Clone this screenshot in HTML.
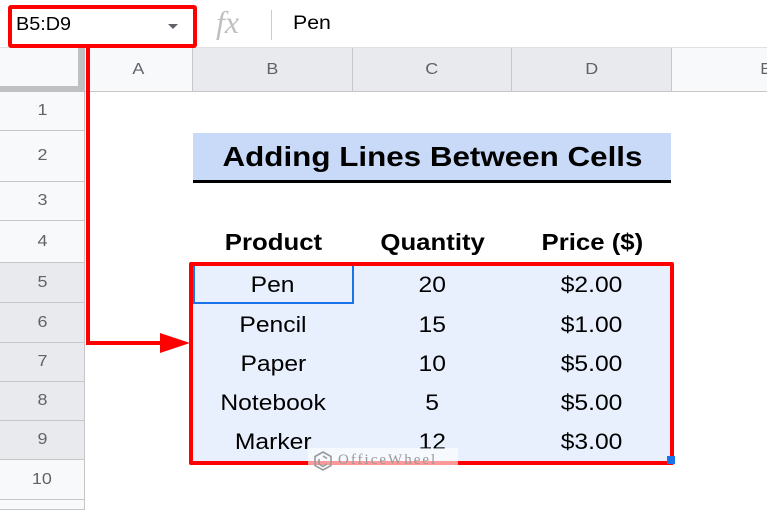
<!DOCTYPE html>
<html><head><meta charset="utf-8"><style>
*{margin:0;padding:0;box-sizing:border-box}
body{width:767px;height:505px;overflow:hidden;background:#fff;font-family:"Liberation Sans",Arial,sans-serif;position:relative}
.a{position:absolute}
.s{display:inline-block;transform:scaleX(1.12)}
.ch{position:absolute;top:48px;height:44px;border-right:1px solid #c7c7c7;border-bottom:1px solid #c7c7c7;color:#5f6368;font-size:16px;display:flex;align-items:center;justify-content:center}
.rh{position:absolute;left:0;width:85px;border-bottom:1px solid #c7c7c7;border-right:1px solid #c7c7c7;color:#5f6368;font-size:16px;display:flex;align-items:center;justify-content:center}
.c{position:absolute;font-size:22px;color:#000;display:flex;align-items:center;justify-content:center;height:40px}
</style></head><body>
<div class="a" style="left:0;top:0;width:767px;height:48px;background:#fff;border-bottom:1px solid #e0e0e0"></div>
<div class="a" style="left:8px;top:5px;width:189px;height:43px;border:4px solid #f00;border-radius:3px"></div>
<div class="a" style="left:16px;top:14px;font-size:18px;color:#000;transform-origin:left;transform:scaleX(1.1)">B5:D9</div>
<div class="a" style="left:168px;top:24px;width:0;height:0;border-left:5px solid transparent;border-right:5px solid transparent;border-top:5px solid #5f6368"></div>
<div class="a" style="left:216px;top:4px;font-size:32px;font-style:italic;font-family:'Liberation Serif',serif;color:#c0c0c0">fx</div>
<div class="a" style="left:271px;top:10px;width:1px;height:30px;background:#ccc"></div>
<div class="a" style="left:293px;top:13px;font-size:19px;color:#000;transform-origin:left;transform:scaleX(1.12)">Pen</div>

<div class="a" style="left:0;top:48px;width:85px;height:44px;background:#f8f9fa"></div>
<div class="a" style="left:78px;top:48px;width:7px;height:44px;background:#c0c0c0"></div>
<div class="a" style="left:0;top:86px;width:85px;height:6px;background:#c0c0c0"></div>
<div class="ch" style="left:85px;width:108px;background:#f8f9fa"><span class="s">A</span></div>
<div class="ch" style="left:193px;width:160px;background:#e8eaed"><span class="s">B</span></div>
<div class="ch" style="left:353px;width:159px;background:#e8eaed"><span class="s">C</span></div>
<div class="ch" style="left:512px;width:160px;background:#e8eaed"><span class="s">D</span></div>
<div class="ch" style="left:672px;width:120px;background:#f8f9fa;justify-content:flex-end;padding-right:20px">E</div>

<div class="rh" style="top:92px;height:39px;background:#f8f9fa"><span class="s">1</span></div>
<div class="rh" style="top:131px;height:51px;background:#f8f9fa"><span class="s">2</span></div>
<div class="rh" style="top:182px;height:39px;background:#f8f9fa"><span class="s">3</span></div>
<div class="rh" style="top:221px;height:42px;background:#f8f9fa"><span class="s">4</span></div>
<div class="rh" style="top:263px;height:40px;background:#e8eaed"><span class="s">5</span></div>
<div class="rh" style="top:303px;height:40px;background:#e8eaed"><span class="s">6</span></div>
<div class="rh" style="top:343px;height:39px;background:#e8eaed"><span class="s">7</span></div>
<div class="rh" style="top:382px;height:39px;background:#e8eaed"><span class="s">8</span></div>
<div class="rh" style="top:421px;height:39px;background:#e8eaed"><span class="s">9</span></div>
<div class="rh" style="top:460px;height:40px;background:#f8f9fa"><span class="s">10</span></div>
<div class="rh" style="top:500px;height:10px;background:#f8f9fa"></div>

<div class="a" style="left:193px;top:133px;width:478px;height:50px;background:#c9daf8;border-bottom:3px solid #000"></div>
<div class="a" style="left:193px;top:141px;width:478px;text-align:center;font-size:28px;font-weight:bold;color:#000"><span class="s">Adding Lines Between Cells</span></div>

<div class="c" style="left:193px;top:222px;width:160px;font-weight:bold;font-size:23px"><span class="s">Product</span></div>
<div class="c" style="left:353px;top:222px;width:159px;font-weight:bold;font-size:23px"><span class="s">Quantity</span></div>
<div class="c" style="left:512px;top:222px;width:160px;font-weight:bold;font-size:23px"><span class="s">Price ($)</span></div>

<div class="a" style="left:193px;top:263px;width:479px;height:198px;background:#e8f0fd"></div>
<div class="a" style="left:193px;top:264px;width:161px;height:40px;border:2px solid #1a73e8"></div>

<div class="c" style="left:193px;top:265px;width:160px"><span class="s">Pen</span></div>
<div class="c" style="left:353px;top:265px;width:159px"><span class="s">20</span></div>
<div class="c" style="left:512px;top:265px;width:160px"><span class="s">$2.00</span></div>
<div class="c" style="left:193px;top:305px;width:160px"><span class="s">Pencil</span></div>
<div class="c" style="left:353px;top:305px;width:159px"><span class="s">15</span></div>
<div class="c" style="left:512px;top:305px;width:160px"><span class="s">$1.00</span></div>
<div class="c" style="left:193px;top:344px;width:160px"><span class="s">Paper</span></div>
<div class="c" style="left:353px;top:344px;width:159px"><span class="s">10</span></div>
<div class="c" style="left:512px;top:344px;width:160px"><span class="s">$5.00</span></div>
<div class="c" style="left:193px;top:383px;width:160px"><span class="s">Notebook</span></div>
<div class="c" style="left:353px;top:383px;width:159px"><span class="s">5</span></div>
<div class="c" style="left:512px;top:383px;width:160px"><span class="s">$5.00</span></div>
<div class="c" style="left:193px;top:422px;width:160px"><span class="s">Marker</span></div>
<div class="c" style="left:353px;top:422px;width:159px"><span class="s">12</span></div>
<div class="c" style="left:512px;top:422px;width:160px"><span class="s">$3.00</span></div>

<div class="a" style="left:189px;top:262px;width:485px;height:203px;border:4px solid #f00;border-radius:2px"></div>
<div class="a" style="left:667px;top:456px;width:8px;height:8px;background:#1a73e8"></div>

<div class="a" style="left:86px;top:47px;width:4px;height:298px;background:#f00"></div>
<div class="a" style="left:86px;top:341px;width:82px;height:4px;background:#f00"></div>
<svg class="a" style="left:160px;top:333px" width="30" height="20"><polygon points="0,0 30,10 0,20" fill="#f00"/></svg>

<div class="a" style="left:308px;top:448px;width:150px;height:24px;background:rgba(255,255,255,0.6)"></div>
<svg class="a" style="left:312px;top:450px" width="22" height="22" viewBox="0 0 22 22"><path d="M11 2 L19 6.5 V15.5 L11 20 L3 15.5 V6.5 Z M11 6 L15 8.5 M7 9 V14 L11 16.5 L15 14" fill="none" stroke="#999" stroke-width="1.6"/></svg>
<div class="a" style="left:338px;top:452px;font-size:15px;letter-spacing:2px;color:#999;font-family:'Liberation Serif',serif">OfficeWheel</div>
</body></html>
